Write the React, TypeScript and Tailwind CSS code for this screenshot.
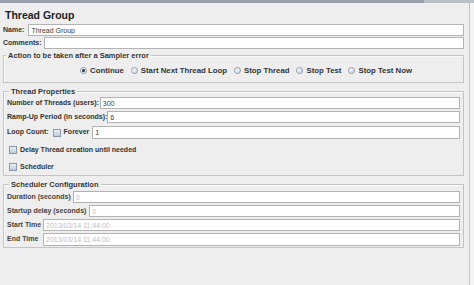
import React from 'react'

const font = "font-['Liberation_Sans',Arial,sans-serif]"

function Field({ value = '', disabled = false, className = '' }: { value?: string; disabled?: boolean; className?: string }) {
  return (
    <input
      readOnly
      defaultValue={value}
      className={`h-full min-w-0 flex-1 border border-[#b3b3b3] bg-white px-[2px] text-[7px] font-normal outline-none ${
        disabled ? 'text-[#b3bfcd]' : 'text-[#3a3a3a]'
      } ${className}`}
    />
  )
}

function Radio({ label, checked = false }: { label: string; checked?: boolean }) {
  return (
    <div className="flex items-center gap-[3px]">
      <span className="flex h-[7px] w-[7px] items-center justify-center rounded-full border border-[#8b9bb0] bg-gradient-to-br from-white to-[#c9d5e2]">
        {checked && <span className="h-[3px] w-[3px] rounded-full bg-[#2f3440]" />}
      </span>
      <span>{label}</span>
    </div>
  )
}

function Check() {
  return <span className="h-[8px] w-[8px] shrink-0 border border-[#8a99ad] bg-gradient-to-b from-[#e9eff5] to-[#bfcddc]" />
}

function Panel({ title, className = '', children }: { title: string; className?: string; children: React.ReactNode }) {
  return (
    <fieldset className={`border border-[#c4c4c4] shadow-[inset_1px_1px_0_#fafafa] ${className}`}>
      <legend className="ml-[2px] px-[2px] text-[7.5px] font-bold leading-[9px] text-[#333]">{title}</legend>
      {children}
    </fieldset>
  )
}

export default function App() {
  return (
    <div className={`flex h-[285px] w-[474px] flex-col overflow-hidden bg-[#eeeeee] ${font}`}>
      <div className="flex h-[3px]">
        <div className="flex-1 bg-[#9aa3ad]" />
        <div className="w-[50px] bg-[#b9c0c8]" />
      </div>

      <div className="flex flex-1">
        <div className="w-[469px] whitespace-nowrap pl-[3px] pr-[5px] text-[7px] font-bold text-[#333]">
          <h1 className="ml-[2px] mt-[6px] text-[10.5px] font-bold leading-[13px] text-[#222]">Thread Group</h1>

          <div className="mt-[2px] flex h-[12px] items-center gap-[4px]">
            <span>Name:</span>
            <Field value="Thread Group" />
          </div>
          <div className="mt-[1px] flex h-[12px] items-center gap-[2px]">
            <span>Comments:</span>
            <Field />
          </div>

          <Panel title="Action to be taken after a Sampler error" className="mt-[2px] pb-[7px] pt-[6px]">
            <div className="flex h-[9px] items-center gap-[7px] pl-[76px] text-[7.8px]">
              <Radio label="Continue" checked />
              <Radio label="Start Next Thread Loop" />
              <Radio label="Stop Thread" />
              <Radio label="Stop Test" />
              <Radio label="Stop Test Now" />
            </div>
          </Panel>

          <Panel title="Thread Properties" className="mt-[4px] px-[3px] pb-[3px]">
            <div className="mt-[1px] flex h-[12px] items-center gap-[1px]">
              <span>Number of Threads (users):</span>
              <Field value="300" />
            </div>
            <div className="mt-[2px] flex h-[12px] items-center">
              <span>Ramp-Up Period (in seconds):</span>
              <Field value="6" />
            </div>
            <div className="mt-[3px] flex h-[13px] items-center">
              <span>Loop Count:</span>
              <span className="ml-[4px] flex items-center gap-[3px]">
                <Check />
                <span>Forever</span>
              </span>
              <Field value="1" className="ml-[3px]" />
            </div>
            <div className="ml-[2px] mt-[6px] flex h-[10px] items-center gap-[3px]">
              <Check />
              <span>Delay Thread creation until needed</span>
            </div>
            <div className="ml-[2px] mt-[7px] flex h-[10px] items-center gap-[3px]">
              <Check />
              <span>Scheduler</span>
            </div>
          </Panel>

          <Panel title="Scheduler Configuration" className="mt-[4px] px-[3px] pb-[1px] text-[#444]">
            <div className="mt-[2px] flex h-[12px] items-center gap-[2px]">
              <span>Duration (seconds)</span>
              <Field value="0" disabled />
            </div>
            <div className="mt-[2px] flex h-[12px] items-center gap-[3px]">
              <span>Startup delay (seconds)</span>
              <Field value="0" disabled />
            </div>
            <div className="mt-[2px] flex h-[12px] items-center">
              <span className="w-[36px] shrink-0">Start Time</span>
              <Field value="2013/03/14 11:44:00" disabled />
            </div>
            <div className="mt-[2px] flex h-[13px] items-center">
              <span className="w-[36px] shrink-0">End Time</span>
              <Field value="2013/03/14 11:44:00" disabled />
            </div>
          </Panel>
        </div>
        <div className="w-[1px] bg-[#c2c2c2]" />
        <div className="flex-1 bg-[#f5f5f5]" />
      </div>
    </div>
  )
}
